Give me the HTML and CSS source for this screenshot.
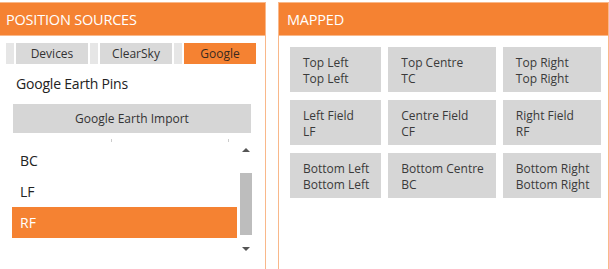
FILE: index.html
```html
<!DOCTYPE html>
<html>
<head>
<meta charset="utf-8">
<link rel="stylesheet" href="styles.css">
</head>
<body>
<div class="page">
  <section class="panel left">
    <header class="panel-head">POSITION SOURCES</header>
    <div class="left-body">
      <div class="tabs">
        <div class="tab"><span class="tab-edge"></span><span class="tab-main">Devices</span></div>
        <div class="tab"><span class="tab-edge"></span><span class="tab-main">ClearSky</span></div>
        <div class="tab"><span class="tab-edge"></span><span class="tab-main active">Google</span></div>
      </div>
      <div class="pins-title">Google Earth Pins</div>
      <div class="import-btn">Google Earth Import</div>
      <div class="list-wrap">
        <div class="list-ticks"><span class="tick t1"></span><span class="tick t2"></span></div>
        <div class="list-row">
          <div class="list">
            <div class="item">BC</div>
            <div class="item">LF</div>
            <div class="item selected">RF</div>
          </div>
          <div class="scrollbar">
            <svg class="arrow" width="8" height="5" viewBox="0 0 8 5"><path d="M0 5 L4 1 L8 5 Z" fill="#555"/></svg>
            <div class="track"><div class="thumb"></div></div>
            <svg class="arrow down" width="8" height="5" viewBox="0 0 8 5"><path d="M0 0 L4 4 L8 0 Z" fill="#555"/></svg>
          </div>
        </div>
      </div>
    </div>
  </section>
  <section class="panel right">
    <header class="panel-head">MAPPED</header>
    <div class="grid">
      <div class="tile"><div>Top Left</div><div>Top Left</div></div>
      <div class="tile"><div>Top Centre</div><div>TC</div></div>
      <div class="tile"><div>Top Right</div><div>Top Right</div></div>
      <div class="tile"><div>Left Field</div><div>LF</div></div>
      <div class="tile"><div>Centre Field</div><div>CF</div></div>
      <div class="tile"><div>Right Field</div><div>RF</div></div>
      <div class="tile"><div>Bottom Left</div><div>Bottom Left</div></div>
      <div class="tile"><div>Bottom Centre</div><div>BC</div></div>
      <div class="tile"><div>Bottom Right</div><div>Bottom Right</div></div>
    </div>
  </section>
</div>
</body>
</html>
```
FILE: styles.css
```css
* { box-sizing: border-box; }
html, body { margin: 0; padding: 0; background: #fff; }
body {
  font-family: "Open Sans", "Noto Sans", sans-serif;
  color: #333;
  width: 609px;
  height: 269px;
  overflow: hidden;
}
.page {
  display: flex;
  gap: 12px;
  padding-top: 2px;
  height: 269px;
}
.panel {
  border: 1px solid #f9b88a;
  border-bottom: none;
  height: 267px;
  display: flex;
  flex-direction: column;
}
.panel.left {
  width: 266px;
  border-left: none;
}
.panel.right {
  width: 331px;
}
.panel-head {
  background: #f58232;
  color: #fff;
  height: 33px;
  font-size: 14.5px;
  line-height: 33px;
  padding-left: 6px;
  border-bottom: 1px solid #f9b88a;
  letter-spacing: -0.2px;
}
.panel.right .panel-head { padding-left: 8px; }

.left-body {
  padding: 7px 0 0 6px;
  display: flex;
  flex-direction: column;
}
.tabs {
  display: flex;
  height: 21px;
  width: 252px;
}
.tab {
  display: flex;
  flex: 1;
}
.tab-edge {
  width: 8px;
  background: #e6e6e6;
  margin-right: 2px;
}
.tab-main {
  flex: 1;
  background: #d9d9d9;
  margin-right: 2px;
  font-size: 12px;
  line-height: 21px;
  text-align: center;
  color: #333;
}
.tab-main.active { background: #f58232; color: #3a2a20; }

.pins-title {
  font-size: 14px;
  color: #222;
  margin: 10px 0 0 10px;
  line-height: 19px;
  letter-spacing: -0.2px;
}
.import-btn {
  margin: 11px 0 0 7px;
  width: 238px;
  height: 29px;
  background: #d6d6d6;
  font-size: 12px;
  line-height: 29px;
  text-align: center;
  color: #333;
}
.list-wrap {
  margin-left: 6px;
  width: 240px;
}
.list-ticks {
  position: relative;
  height: 12px;
}
.tick {
  position: absolute;
  top: 6px;
  width: 1px;
  height: 3px;
  background: #ccc;
}
.t1 { left: 99px; }
.t2 { left: 216px; }
.list-row {
  display: flex;
}
.list {
  width: 225px;
  padding-top: 0;
}
.item {
  height: 31px;
  line-height: 31px;
  padding-left: 8px;
  font-size: 14px;
  color: #222;
}
.item.selected {
  background: #f58232;
  color: #fff;
}
.scrollbar {
  width: 13px;
  margin-left: 2px;
  display: flex;
  flex-direction: column;
  align-items: center;
  padding-top: 2px;
}
.arrow { display: block; }
.track {
  height: 87px;
  width: 12px;
  padding-top: 21px;
}
.thumb {
  height: 62px;
  width: 12px;
  background: #bdbdbd;
}
.arrow.down { margin-top: 8px; }

.grid {
  display: grid;
  grid-template-columns: repeat(3, auto);
  justify-content: start;
  gap: 8px 7px;
  padding: 11px 0 0 11px;
}
.tile {
  background: #d6d6d6;
  height: 45px;
  padding: 8px 12px 0 13px;
  font-size: 12px;
  line-height: 16px;
  color: #3a3a3a;
  white-space: nowrap;
}
```
